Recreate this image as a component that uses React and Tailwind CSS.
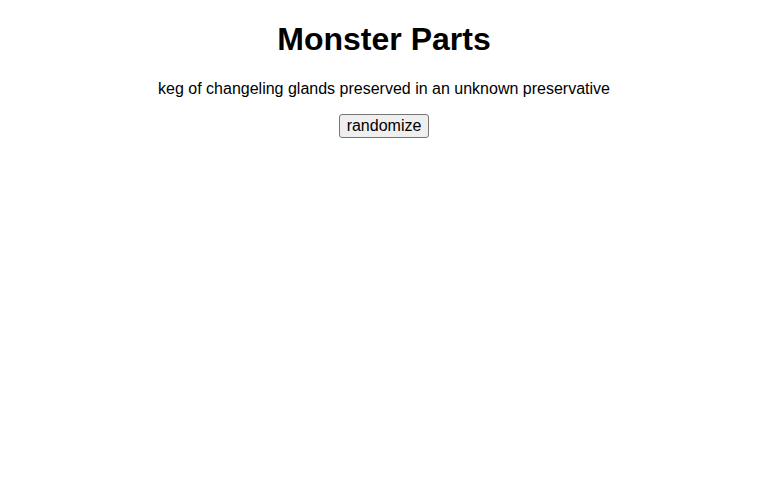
const App = () => {
  return (
    <div className="flex flex-col items-center bg-white text-black font-['Liberation_Sans',Arial,sans-serif]">
      <h1 className="mt-[21px] mb-[21px] text-[32px] leading-[37px] font-bold">Monster Parts</h1>
      <p className="text-base leading-[20px]">keg of changeling glands preserved in an unknown preservative</p>
      <div className="mt-[15px]">
        <button className="h-6 px-[7px] text-base leading-[18px] bg-[#efefef] border border-[#767676] rounded-[3px] hover:bg-[#e5e5e5]">
          randomize
        </button>
      </div>
    </div>
  )
}

export default App
